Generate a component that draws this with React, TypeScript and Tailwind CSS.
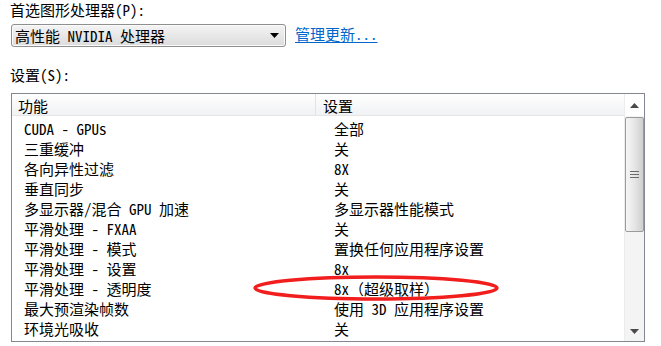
import React from 'react';

const rows: [string, string][] = [
  ['CUDA - GPUs', '全部'],
  ['三重缓冲', '关'],
  ['各向异性过滤', '8X'],
  ['垂直同步', '关'],
  ['多显示器/混合 GPU 加速', '多显示器性能模式'],
  ['平滑处理 - FXAA', '关'],
  ['平滑处理 - 模式', '置换任何应用程序设置'],
  ['平滑处理 - 设置', '8x'],
  ['平滑处理 - 透明度', '8x（超级取样）'],
  ['最大预渲染帧数', '使用 3D 应用程序设置'],
  ['环境光吸收', '关'],
  ['电源管理模式', '自适应'],
];

function Triangle({ down }: { down?: boolean }) {
  return (
    <svg width="9" height="5" viewBox="0 0 9 5">
      <path d={down ? 'M0 0h9L4.5 5z' : 'M0 5h9L4.5 0z'} fill="#4a4a4a" />
    </svg>
  );
}

function Scrollbar() {
  return (
    <div className="flex w-[20px] flex-col bg-[#f4f4f4] border-l border-[#ececec]">
      {/* up button */}
      <div className="flex h-[22px] items-center justify-center bg-white">
        <Triangle />
      </div>
      {/* thumb */}
      <div className="mt-[1px] flex h-[115px] items-center justify-center rounded-[2px] border border-[#9b9b9b] bg-linear-to-r from-[#f6f6f6] via-[#e6e6e6] to-[#cfcfcf]">
        <div className="flex flex-col gap-[2px]">
          <div className="h-[1px] w-[9px] bg-[#6a6a6a]" />
          <div className="h-[1px] w-[9px] bg-[#6a6a6a]" />
          <div className="h-[1px] w-[9px] bg-[#6a6a6a]" />
        </div>
      </div>
      <div className="flex-1" />
      {/* down button */}
      <div className="flex h-[20px] items-center justify-center">
        <Triangle down />
      </div>
    </div>
  );
}

export default function App() {
  return (
    <div className="relative h-[346px] w-[661px] overflow-hidden bg-white text-[15px] leading-[16px] text-black font-['Noto_Sans_Mono_CJK_SC','Noto_Sans_CJK_SC',sans-serif]">
      <div className="pl-[10px] pt-[2px]">首选图形处理器(P):</div>

      <div className="mt-[6px] flex items-start pl-[11px]">
        <div className="flex h-[23px] w-[275px] items-center justify-between rounded-[3px] border border-[#8f8f8f] bg-linear-to-b from-[#f4f4f4] to-[#dcdcdc] pl-[3px] pr-[6px] shadow-[inset_0_0_0_1px_#fbfbfb]">
          <span>高性能 NVIDIA 处理器</span>
          <svg width="9" height="5" viewBox="0 0 9 5">
            <path d="M0 0h9L4.5 5z" fill="#000" />
          </svg>
        </div>
        <a className="ml-[9px] mt-[2px] text-[#0066cc] underline underline-offset-[2px]">管理更新...</a>
      </div>

      <div className="mt-[20px] pl-[10px]">设置(S):</div>

      <div className="absolute left-[11px] top-[93px] flex h-[249px] w-[634px] border border-[#828790] bg-white">
        <div className="flex flex-1 flex-col overflow-hidden">
          {/* header */}
          <div className="flex h-[22px] shrink-0 border-b border-[#e5e5e5] bg-linear-to-b from-white to-[#f1f2f4]">
            <div className="flex w-[304px] items-center border-r border-[#e2e3e5] pl-[6px] pt-[2px]">功能</div>
            <div className="flex flex-1 items-center pl-[7px] pt-[2px]">设置</div>
          </div>
          <div className="pt-[3px]">
            {rows.map(([name, value]) => (
              <div key={name} className="flex h-[20px] items-center">
                <div className="w-[304px] pl-[12px] whitespace-pre">{name}</div>
                <div className="flex-1 pl-[18px] whitespace-pre">{value}</div>
              </div>
            ))}
          </div>
        </div>
        <Scrollbar />
      </div>

      {/* red annotation */}
      <svg className="pointer-events-none absolute left-0 top-0" width="661" height="346">
        <ellipse cx="376" cy="288" rx="121" ry="11" fill="none" stroke="#f21d1d" strokeWidth="3.5" />
      </svg>
    </div>
  );
}
